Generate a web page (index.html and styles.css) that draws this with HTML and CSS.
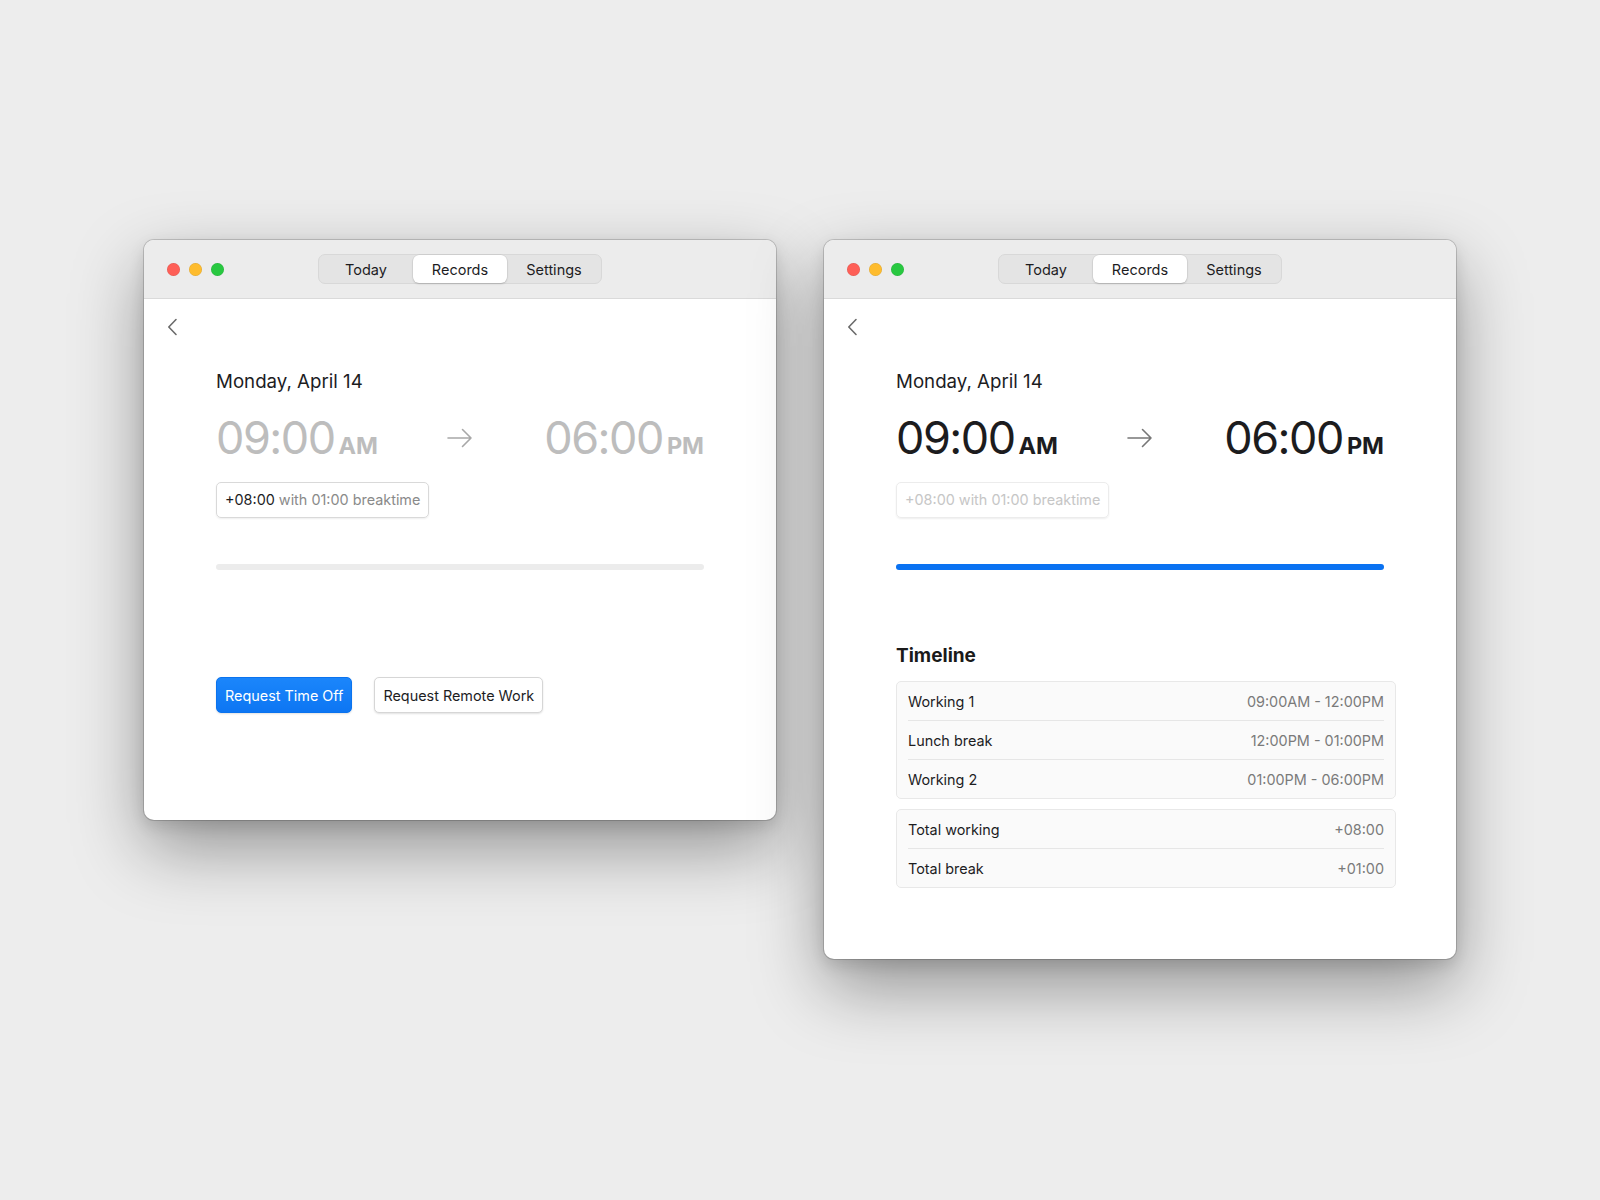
FILE: index.html
```html
<!DOCTYPE html>
<html lang="en">
<head>
    <meta charset="UTF-8">
    <meta name="viewport" content="width=device-width, initial-scale=1.0">
    <title>Records</title>
    <link rel="stylesheet" href="styles.css">
</head>
<body>
    <main class="desk">
        <!-- day not finished yet: greyed times, request buttons -->
        <section class="window window--pending">
            <header class="titlebar">
                <div class="lights">
                    <span class="light light--close"></span>
                    <span class="light light--min"></span>
                    <span class="light light--max"></span>
                </div>
                <nav class="segmented">
                    <button class="segment">Today</button>
                    <button class="segment active">Records</button>
                    <button class="segment">Settings</button>
                </nav>
                <div></div>
            </header>
            <div class="window-body">
                <button class="back" aria-label="Back">
                    <svg width="11" height="18" viewBox="0 0 11 18"><path d="M9 1.5 L1.8 9 L9 16.5"/></svg>
                </button>
                <div class="day">
                    <h1 class="date">Monday, April 14</h1>
                    <div class="span-row">
                        <div class="clock"><span class="digits">09:00</span><span class="meridiem">AM</span></div>
                        <svg class="arrow" width="26" height="20" viewBox="0 0 26 20"><path d="M1 10 H24 M15.5 1.5 L24 10 L15.5 18.5"/></svg>
                        <div class="clock clock--end"><span class="digits">06:00</span><span class="meridiem">PM</span></div>
                    </div>
                    <div class="duration"><strong>+08:00</strong> with 01:00 breaktime</div>
                    <div class="progress"><div class="progress-fill" style="width: 0%"></div></div>
                    <div class="actions">
                        <button class="btn btn--primary">Request Time Off</button>
                        <button class="btn">Request Remote Work</button>
                    </div>
                </div>
            </div>
        </section>

        <!-- finished day with the timeline breakdown -->
        <section class="window window--done">
            <header class="titlebar">
                <div class="lights">
                    <span class="light light--close"></span>
                    <span class="light light--min"></span>
                    <span class="light light--max"></span>
                </div>
                <nav class="segmented">
                    <button class="segment">Today</button>
                    <button class="segment active">Records</button>
                    <button class="segment">Settings</button>
                </nav>
                <div></div>
            </header>
            <div class="window-body">
                <button class="back" aria-label="Back">
                    <svg width="11" height="18" viewBox="0 0 11 18"><path d="M9 1.5 L1.8 9 L9 16.5"/></svg>
                </button>
                <div class="day">
                    <h1 class="date">Monday, April 14</h1>
                    <div class="span-row">
                        <div class="clock"><span class="digits">09:00</span><span class="meridiem">AM</span></div>
                        <svg class="arrow" width="26" height="20" viewBox="0 0 26 20"><path d="M1 10 H24 M15.5 1.5 L24 10 L15.5 18.5"/></svg>
                        <div class="clock clock--end"><span class="digits">06:00</span><span class="meridiem">PM</span></div>
                    </div>
                    <div class="duration"><strong>+08:00</strong> with 01:00 breaktime</div>
                    <div class="progress"><div class="progress-fill" style="width: 100%"></div></div>

                    <div class="timeline">
                        <h2>Timeline</h2>
                        <div class="card">
                            <div class="row"><span>Working 1</span><span class="value">09:00AM - 12:00PM</span></div>
                            <div class="row"><span>Lunch break</span><span class="value">12:00PM - 01:00PM</span></div>
                            <div class="row"><span>Working 2</span><span class="value">01:00PM - 06:00PM</span></div>
                        </div>
                        <div class="card">
                            <div class="row"><span>Total working</span><span class="value">+08:00</span></div>
                            <div class="row"><span>Total break</span><span class="value">+01:00</span></div>
                        </div>
                    </div>
                </div>
            </div>
        </section>
    </main>
</body>
</html>
```

FILE: styles.css
```css
* {
    box-sizing: border-box;
}
body {
    margin: 0;
    min-height: 100vh;
    background: #ededed;
    font-family: Inter, 'Noto Sans', sans-serif;
    color: #1d1d1f;
}
button {
    font: inherit;
    color: inherit;
}
.desk {
    display: flex;
    justify-content: center;
    align-items: flex-start;
    gap: 48px;
    padding-top: 240px;
}

/* window chrome */
.window {
    width: 632px;
    background: #fff;
    border-radius: 10px;
    overflow: hidden;
    box-shadow: 0 0 0 1px rgba(0, 0, 0, 0.16), 0 28px 70px rgba(0, 0, 0, 0.38), 0 6px 16px rgba(0, 0, 0, 0.12);
}
.titlebar {
    display: grid;
    grid-template-columns: 1fr auto 1fr;
    align-items: center;
    height: 59px;
    padding: 0 23px;
    background: #ececec;
    border-bottom: 1px solid #dadada;
}
.lights {
    display: flex;
    gap: 9px;
}
.light {
    width: 13px;
    height: 13px;
    border-radius: 50%;
    box-shadow: inset 0 0 0 0.5px rgba(0, 0, 0, 0.12);
}
.light--close { background: #fe5f57; }
.light--min { background: #febc2e; }
.light--max { background: #28c840; }

.segmented {
    display: flex;
    background: #e4e4e4;
    border: 1px solid #d8d8d8;
    border-radius: 7px;
}
.segment {
    width: 94px;
    height: 28px;
    border: 0;
    background: none;
    font-size: 14.5px;
    color: #1d1d1f;
    border-radius: 6px;
    padding: 0;
}
.segment.active {
    background: #fff;
    box-shadow: 0 1px 2px rgba(0, 0, 0, 0.16), 0 0 0 0.5px rgba(0, 0, 0, 0.08);
}

.window-body {
    padding-top: 19px;
}
.back {
    display: block;
    margin-left: 23px;
    padding: 0;
    border: 0;
    background: none;
    height: 18px;
}
.back svg {
    display: block;
    fill: none;
    stroke: #6b6b6b;
    stroke-width: 1.6;
    stroke-linecap: round;
    stroke-linejoin: round;
}

/* day summary */
.day {
    padding: 0 72px 107px;
}
.window--done .day {
    padding-bottom: 71px;
}
.date {
    margin: 35px 0 0;
    font-size: 18.7px;
    line-height: 22px;
    font-weight: 400;
}
.span-row {
    display: grid;
    grid-template-columns: 1fr auto 1fr;
    align-items: center;
    margin-top: 22px;
    height: 45px;
}
.clock {
    display: flex;
    align-items: baseline;
    gap: 4px;
    line-height: 45px;
}
.clock--end {
    justify-content: flex-end;
}
.digits {
    font-size: 45px;
    font-weight: 400;
    letter-spacing: -1.5px;
}
.meridiem {
    font-size: 23.5px;
    font-weight: 700;
}
.arrow {
    display: block;
    margin-top: -8px;
    fill: none;
    stroke: #777;
    stroke-width: 1.6;
    stroke-linecap: round;
    stroke-linejoin: round;
}
.window--pending .clock {
    color: #bdbdbd;
}
.window--pending .arrow {
    stroke: #a8a8a8;
}
.window--done .clock {
    color: #1c1c1e;
}

.duration {
    display: inline-block;
    margin-top: 22px;
    height: 36px;
    line-height: 34px;
    padding: 0 8px;
    border: 1px solid #d9d9d9;
    border-radius: 5px;
    box-shadow: 0 1px 2px rgba(0, 0, 0, 0.07);
    font-size: 14.4px;
    color: #8a8a8a;
}
.duration strong {
    font-weight: 400;
    color: #1d1d1f;
}
.window--done .duration {
    color: #c6c6c6;
    border-color: #ececec;
}
.window--done .duration strong {
    color: #c6c6c6;
}

.progress {
    margin-top: 46px;
    height: 6px;
    border-radius: 3px;
    background: #ececec;
}
.progress-fill {
    height: 100%;
    border-radius: 3px;
    background: #0a72f2;
}

.actions {
    display: flex;
    gap: 22px;
    margin-top: 107px;
}
.btn {
    height: 36px;
    padding: 0 8px;
    border: 1px solid #d6d6d6;
    border-radius: 5px;
    background: #fff;
    box-shadow: 0 1px 2px rgba(0, 0, 0, 0.12);
    font-size: 14.4px;
    color: #1d1d1f;
}
.btn--primary {
    border-color: #0b73ee;
    background: linear-gradient(#1b86fb, #0d76f3);
    color: #fff;
}

/* timeline breakdown */
.timeline {
    margin-top: 74px;
    margin-right: -12px;
}
.timeline h2 {
    margin: 0 0 13px;
    font-size: 19px;
    line-height: 24px;
    font-weight: 700;
    color: #1a1a1a;
}
.card {
    padding: 0 11px;
    background: #fafafa;
    border: 1px solid #e8e8e8;
    border-radius: 5px;
}
.card + .card {
    margin-top: 10px;
}
.row {
    display: flex;
    justify-content: space-between;
    align-items: center;
    height: 38px;
    font-size: 14.4px;
}
.row + .row {
    height: 39px;
    border-top: 1px solid #e6e6e6;
}
.value {
    color: #7a7a7a;
}
```
